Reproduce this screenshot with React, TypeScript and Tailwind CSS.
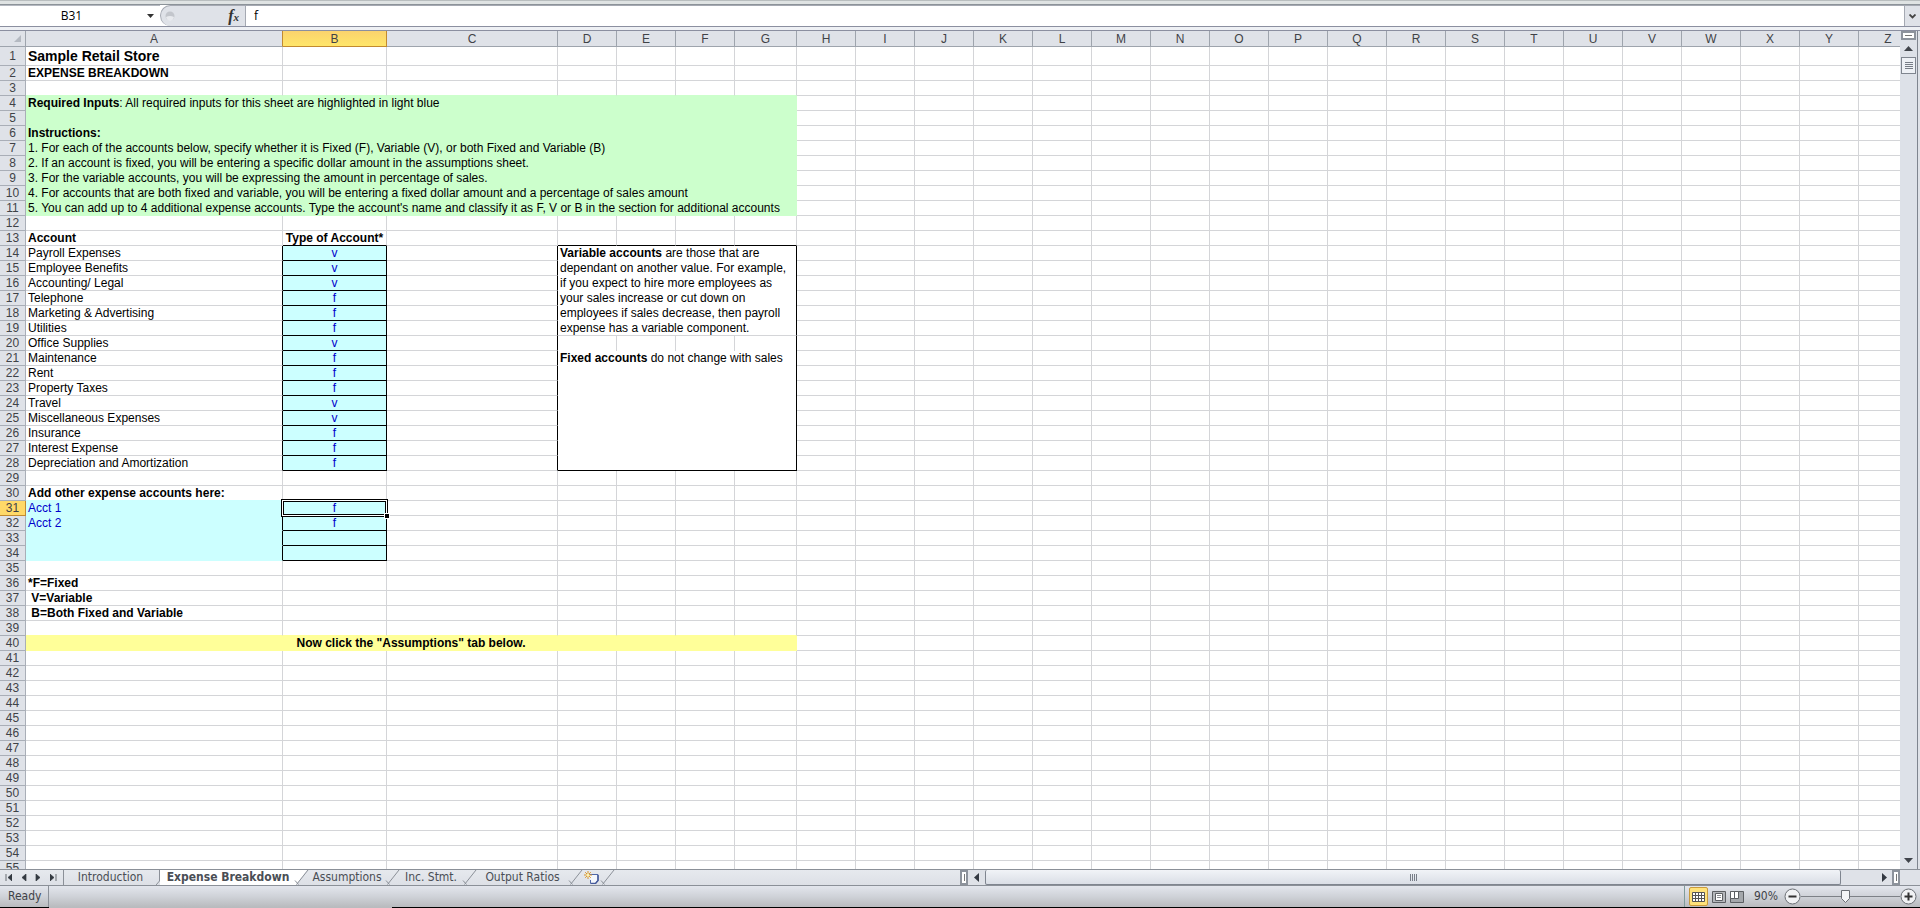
import React from "react";

const GRID = "border-r border-b border-[#d4d5d8]";

const LETTERS = "ABCDEFGHIJKLMNOPQRSTUVWXYZ".split("");

const ACCOUNTS: [string, string][] = [
  ["Payroll Expenses", "v"],
  ["Employee Benefits", "v"],
  ["Accounting/ Legal", "v"],
  ["Telephone", "f"],
  ["Marketing & Advertising", "f"],
  ["Utilities", "f"],
  ["Office Supplies", "v"],
  ["Maintenance", "f"],
  ["Rent", "f"],
  ["Property Taxes", "f"],
  ["Travel", "v"],
  ["Miscellaneous Expenses", "v"],
  ["Insurance", "f"],
  ["Interest Expense", "f"],
  ["Depreciation and Amortization", "f"],
];

const INSTRUCTIONS: Record<number, React.ReactNode> = {
  4: (
    <>
      <b>Required Inputs</b>: All required inputs for this sheet are highlighted in light blue
    </>
  ),
  5: null,
  6: <b>Instructions:</b>,
  7: "1. For each of the accounts below, specify whether it is Fixed (F), Variable (V), or both Fixed and Variable (B)",
  8: "2. If an account is fixed, you will be entering a specific dollar amount in the assumptions sheet.",
  9: "3. For the variable accounts, you will be expressing the amount in percentage of sales.",
  10: "4. For accounts that are both fixed and variable, you will be entering a fixed dollar amount and a percentage of sales amount",
  11: "5. You can add up to 4 additional expense accounts. Type the account's name and classify it as F, V or B in the section for additional accounts",
};

const LABELS: Record<number, string> = {
  2: "EXPENSE BREAKDOWN",
  30: "Add other expense accounts here:",
  36: "*F=Fixed",
  37: "\u00a0V=Variable",
  38: "\u00a0B=Both Fixed and Variable",
};

const EXTRA: Record<number, [string, string]> = {
  31: ["Acct 1", "f"],
  32: ["Acct 2", "f"],
  33: ["", ""],
  34: ["", ""],
};

function Blank({ count, className = GRID }: { count: number; className?: string }) {
  return (
    <>
      {Array.from({ length: count }, (_, i) => (
        <td key={i} className={className} />
      ))}
    </>
  );
}

function AccountType({ value }: { value: string }) {
  return (
    <td className="border-r border-b border-black bg-[#ccffff] text-center text-[#0000cc]">
      {value}
    </td>
  );
}

function RowCells({ row }: { row: number }) {
  if (row in INSTRUCTIONS) {
    return (
      <>
        <td colSpan={7} className="border-r border-b border-[#ccffcc] bg-[#ccffcc] px-[2px]">
          {INSTRUCTIONS[row]}
        </td>
        <Blank count={19} />
      </>
    );
  }

  if (row === 40) {
    return (
      <>
        <td colSpan={7} className="border-r border-b border-[#ffff99] bg-[#ffff99] text-center font-bold">
          Now click the "Assumptions" tab below.
        </td>
        <Blank count={19} />
      </>
    );
  }

  if (row === 3 || row === 39) {
    return (
      <>
        <Blank
          count={7}
          className={
            row === 3
              ? "border-r border-b border-r-[#d4d5d8] border-b-[#ccffcc]"
              : "border-r border-b border-r-[#d4d5d8] border-b-[#ffff99]"
          }
        />
        <Blank count={19} />
      </>
    );
  }

  if (row === 13) {
    return (
      <>
        <td className={`${GRID} px-[2px] font-bold`}>Account</td>
        <td className="border-r border-b border-r-[#d4d5d8] border-b-black text-center font-bold">
          Type of Account*
        </td>
        <Blank count={1} />
        <Blank count={4} className="border-r border-b border-r-[#d4d5d8] border-b-black" />
        <Blank count={19} />
      </>
    );
  }

  if (row >= 14 && row <= 28) {
    const [name, type] = ACCOUNTS[row - 14];
    return (
      <>
        <td className="border-r border-b border-r-black border-b-[#d4d5d8] px-[2px]">{name}</td>
        <AccountType value={type} />
        <td className="border-r border-b border-r-black border-b-[#d4d5d8]" />
        {row === 14 && (
          <td
            colSpan={4}
            rowSpan={6}
            className="border-r border-b border-r-black border-b-[#d4d5d8] px-[2px] align-top"
          >
            <p className="-mb-px leading-[15px]">
              <b>Variable accounts</b> are those that are
              <br />
              dependant on another value. For example,
              <br />
              if you expect to hire more employees as
              <br />
              your sales increase or cut down on
              <br />
              employees if sales decrease, then payroll
              <br />
              expense has a variable component.
            </p>
          </td>
        )}
        {row === 20 && (
          <>
            <Blank count={3} className="border-r border-[#d4d5d8]" />
            <td className="border-r border-black" />
          </>
        )}
        {row === 21 && (
          <td colSpan={4} rowSpan={8} className="border-r border-b border-black px-[2px] align-top">
            <b>Fixed accounts</b> do not change with sales
          </td>
        )}
        <Blank count={19} />
      </>
    );
  }

  if (row in EXTRA) {
    const [name, type] = EXTRA[row];
    return (
      <>
        <td className="border-r border-b border-r-black border-b-[#ccffff] bg-[#ccffff] px-[2px] text-[#0000cc]">
          {name}
        </td>
        {row === 31 ? (
          <td className="relative border-r border-b border-black bg-[#ccffff] text-center text-[#0000cc]">
            {type}
            {/* selection frame and fill handle */}
            <span className="absolute -inset-[2px] border border-black shadow-[inset_0_0_0_1px_white,inset_0_0_0_2px_black]" />
            <span className="absolute -right-[4px] -bottom-[4px] size-[6px] border border-white bg-black" />
          </td>
        ) : (
          <AccountType value={type} />
        )}
        <Blank count={24} />
      </>
    );
  }

  return (
    <>
      <td
        className={
          row === 30
            ? "border-r border-b border-r-[#d4d5d8] border-b-[#ccffff] px-[2px] font-bold"
            : row === 1
              ? `${GRID} px-[2px] text-[14px] font-bold`
              : `${GRID} px-[2px] font-bold`
        }
      >
        {row === 1 ? "Sample Retail Store" : LABELS[row]}
      </td>
      {row === 30 ? <td className="border-r border-b border-r-[#d4d5d8] border-b-black" /> : <Blank count={1} />}
      <Blank count={24} />
    </>
  );
}

function FormulaBar() {
  return (
    <div className="shrink-0">
      <div className="h-[5px] border-t border-b border-t-[#b9bebf] border-b-[#8c9399] bg-[#dfe3e3]" />
      <div className="flex h-[22px] border-b border-[#8b8fa0] bg-[#dfe2e8]">
        <div className="flex w-40 items-center border-t border-[#b4b8c0] bg-white pr-[6px]">
          <input
            aria-label="Name box"
            defaultValue="B31"
            className="w-full min-w-0 flex-1 pr-1 text-center font-['Open_Sans',sans-serif] text-[12px] outline-none"
          />
          <button aria-label="Name list">
            <svg width="7" height="4" viewBox="0 0 7 4">
              <path d="M0 0h7L3.5 4z" fill="#333" />
            </svg>
          </button>
        </div>
        <div className="flex w-[85px] items-center justify-between bg-white">
          <div className="flex h-full flex-1 items-center justify-between rounded-l-full border-t border-l border-[#a5a9b2] bg-[#dfe2e8] pr-[6px] pl-1">
            <svg width="10" height="10" viewBox="0 0 10 10">
              <circle cx="5" cy="5" r="4.5" fill="#c3c6cc" />
              <path d="M1 6q4-2 8 0q-1 4-4 4T1 6z" fill="#e8eaee" />
            </svg>
            <button
              aria-label="Insert function"
              className="font-['Liberation_Serif',serif] text-[16px] leading-none font-bold text-[#333] italic"
            >
              f<span className="text-[11px]">x</span>
            </button>
          </div>
        </div>
        <input
          aria-label="Formula"
          defaultValue="f"
          className="min-w-0 flex-1 border-t border-l border-[#a5a9b2] bg-white pl-2 font-['Open_Sans',sans-serif] text-[12px] outline-none"
        />
        <button
          aria-label="Expand formula bar"
          className="flex w-4 items-center justify-center border-t border-l border-[#a5a9b2] bg-[#dfe2e8]"
        >
          <svg width="7" height="5" viewBox="0 0 7 5">
            <path d="M.5 .5l3 3 3-3" fill="none" stroke="#444" strokeWidth="1.8" />
          </svg>
        </button>
      </div>
      <div className="h-[4px] border-b border-[#8b8fa0] bg-[#eef0f4]" />
    </div>
  );
}

function Sheet() {
  return (
    <div className="min-h-0 min-w-0 flex-1 overflow-hidden bg-white">
      <table className="w-[1918px] table-fixed border-separate border-spacing-0 text-[12px] leading-[14px] whitespace-nowrap text-black">
        <colgroup>
          <col className="w-[26px]" />
          <col className="w-[257px]" />
          <col className="w-[104px]" />
          <col className="w-[171px]" />
          <col className="w-[59px]" span={3} />
          <col className="w-[62px]" />
          <col className="w-[59px]" span={19} />
        </colgroup>
        <thead>
          <tr className="h-4 text-[12px] text-[#3f4247]">
            <th className="border-r border-b border-[#9ea4ad] bg-[#dfe2e8]">
              <svg width="7" height="7" viewBox="0 0 7 7" className="mr-1 ml-auto">
                <path d="M7 0v7H0z" fill="#b4b9c1" />
              </svg>
            </th>
            {LETTERS.map((letter) => (
              <th
                key={letter}
                className={
                  letter === "B"
                    ? "border-r border-b border-[#c28a30] bg-linear-to-b from-[#fbd36d] to-[#ffe66a] font-normal"
                    : letter === "A"
                      ? "border-r border-b border-r-[#c28a30] border-b-[#9ea4ad] bg-[#dfe2e8] font-normal"
                      : "border-r border-b border-[#9ea4ad] bg-[#dfe2e8] font-normal"
                }
              >
                {letter}
              </th>
            ))}
          </tr>
        </thead>
        <tbody>
          {Array.from({ length: 55 }, (_, i) => i + 1).map((row) => (
            <tr key={row} className={row === 1 ? "h-[19px]" : "h-[15px]"}>
              <th
                className={
                  row === 31
                    ? "border-r border-b border-[#c28a30] bg-[#ffd968] text-[12px] font-normal text-[#3f4247]"
                    : "border-r border-b border-[#a9aeb7] bg-[#dfe2e8] text-[12px] font-normal text-[#3f4247]"
                }
              >
                {row}
              </th>
              <RowCells row={row} />
            </tr>
          ))}
        </tbody>
      </table>
    </div>
  );
}

function VerticalScroll() {
  return (
    <div className="flex w-5 shrink-0 bg-[#dfe2e8]">
      <div className="flex w-[18px] flex-col items-center border-r border-[#7f858f] bg-[#dde1e8]">
        <div className="flex h-[9px] w-[15px] items-center justify-center border-2 border-[#8d939c] bg-white">
          <div className="h-px w-[7px] bg-[#777]" />
        </div>
        <button aria-label="Scroll up" className="flex h-[17px] items-center">
          <svg width="9" height="5" viewBox="0 0 9 5">
            <path d="M0 5h9L4.5 0z" fill="#40444b" />
          </svg>
        </button>
        <div className="flex h-[17px] w-[15px] flex-col items-center justify-center gap-px border border-[#7f858f] bg-[#eef1f6]">
          {[0, 1, 2, 3].map((n) => (
            <div key={n} className="h-px w-2 bg-[#777d87]" />
          ))}
        </div>
        <div className="flex-1" />
        <button aria-label="Scroll down" className="flex h-[17px] items-center">
          <svg width="9" height="5" viewBox="0 0 9 5">
            <path d="M0 0h9L4.5 5z" fill="#40444b" />
          </svg>
        </button>
      </div>
    </div>
  );
}

function Slant({ fill = "none" }: { fill?: string }) {
  return (
    <svg width="15" height="15" viewBox="0 0 15 15" className="shrink-0">
      <path d="M0 0h13L2 15H0z" fill={fill} />
      <path d="M14 0L2.500 14.500M1 10.500l3.500 4" fill="none" stroke="#8b9098" />
    </svg>
  );
}

function SheetTabs() {
  return (
    <div className="flex min-w-0 flex-1 items-stretch bg-linear-to-b from-[#e6e9ee] to-[#dde0e6] text-[#4a4e55]">
      <div className="flex w-[63px] shrink-0 items-center gap-2 pl-[5px]">
        {[
          ["First sheet", "M1 0v7M7 0v7L3 3.500z"],
          ["Previous sheet", "M6 0v7L2 3.500z"],
          ["Next sheet", "M1 0v7L5 3.500z"],
          ["Last sheet", "M0 0v7L4 3.500zM6 0v7"],
        ].map(([label, d]) => (
          <button key={label} aria-label={label}>
            <svg width="7" height="7" viewBox="0 0 7 7">
              <path d={d} fill="#333941" stroke="#333941" strokeWidth=".7" />
            </svg>
          </button>
        ))}
      </div>
      <button className="w-[93px] shrink-0 border-l border-[#8b9098] pl-px">Introduction</button>
      <svg width="4" height="15" viewBox="0 0 4 15" className="shrink-0">
        <path d="M3.500 0v11L0 15" fill="none" stroke="#8b9098" />
      </svg>
      <button className="w-[134px] shrink-0 bg-white pl-[2px] font-bold">Expense Breakdown</button>
      <Slant fill="#fff" />
      <button className="w-[76px] shrink-0">Assumptions</button>
      <Slant />
      <button className="w-[62px] shrink-0">Inc. Stmt.</button>
      <Slant />
      <button className="w-[91px] shrink-0">Output Ratios</button>
      <Slant />
      <button aria-label="Insert worksheet" className="flex w-[17px] shrink-0 items-center justify-center">
        <svg width="15" height="13" viewBox="0 0 15 13">
          <path d="M5 3.500h9v6l-2.500 3H6.500V9" fill="#f4f7fc" stroke="#5068a8" />
          <path d="M14 4v5.500l-2.500 3H7" fill="none" stroke="#44599a" strokeWidth="1.500" />
          <path d="M4 0v8M0 4h8M1.200 1.200l5.600 5.600M6.800 1.200L1.200 6.800" stroke="#d9952b" />
          <circle cx="4" cy="4" r="1.500" fill="#fff3b0" />
        </svg>
      </button>
      <Slant />
    </div>
  );
}

function HorizontalScroll() {
  return (
    <div className="flex min-w-0 flex-1 items-stretch">
      <div className="flex w-2 items-center justify-center border-2 border-[#8d939c] bg-white">
        <div className="h-[7px] w-px bg-[#777]" />
      </div>
      <button aria-label="Scroll left" className="flex w-[17px] items-center justify-center">
        <svg width="5" height="9" viewBox="0 0 5 9">
          <path d="M5 0v9L0 4.500z" fill="#333941" />
        </svg>
      </button>
      <div className="flex flex-1">
        <div className="flex w-[96%] items-center justify-center gap-px rounded-xs border-x border-b border-[#7f858f] bg-linear-to-b from-[#f1f3f7] to-[#dadee6]">
          {[0, 1, 2, 3].map((n) => (
            <div key={n} className="h-[7px] w-px bg-[#777d87]" />
          ))}
        </div>
      </div>
      <button aria-label="Scroll right" className="flex w-[15px] items-center justify-center">
        <svg width="5" height="9" viewBox="0 0 5 9">
          <path d="M0 0v9l5-4.500z" fill="#333941" />
        </svg>
      </button>
      <div className="mr-5 flex w-2 items-center justify-center border-2 border-[#8d939c] bg-white">
        <div className="h-[7px] w-px bg-[#777]" />
      </div>
    </div>
  );
}

function StatusBar() {
  return (
    <div className="flex h-[21px] items-center bg-linear-to-b from-[#e3e6ed] via-[#cfd2d8] to-[#b9bbbe] text-[#3f4247]">
      <div className="flex h-full w-[49px] items-center border-r border-[#8b9098] pl-2">Ready</div>
      <div className="flex-1" />
      <div className="mr-1 flex h-full items-center gap-1 border-l border-[#7f9a9a] pl-1">
        <button
          aria-label="Normal view"
          className="flex h-[19px] w-[19px] items-center justify-center rounded-xs border border-[#c99a3c] bg-[#ffe27a]"
        >
          <svg width="13" height="10" viewBox="0 0 13 10">
            <path d="M.5.5h12v9H.5zM.5 3.500h12M.5 6.500h12M3.500.5v9M6.500.5v9M9.500.5v9" fill="#fff" stroke="#555" />
          </svg>
        </button>
        <button aria-label="Page layout">
          <svg width="14" height="12" viewBox="0 0 14 12">
            <path d="M.5.5h13v11H.5z" fill="#b4b7bb" stroke="#5c5f63" />
            <path d="M3.500 2.500h7v7h-7z" fill="#fff" stroke="#5c5f63" />
            <path d="M5 4.500h4M5 6.500h4" stroke="#8b8e93" />
          </svg>
        </button>
        <button aria-label="Page break preview">
          <svg width="14" height="12" viewBox="0 0 14 12">
            <path d="M.5.5h13v11H.5z" fill="#a4a7ab" stroke="#5c5f63" />
            <path d="M.5.5h4v7h-4zM4.500.5h4v7h-4z" fill="#fff" stroke="#5c5f63" />
          </svg>
        </button>
      </div>
      <button className="w-9">90%</button>
      <button aria-label="Zoom out">
        <svg width="17" height="17" viewBox="0 0 17 17">
          <circle cx="8.500" cy="8.500" r="7.500" fill="#f1f2f4" stroke="#6b6f75" />
          <path d="M4.500 8.500h8" stroke="#333" strokeWidth="2" />
        </svg>
      </button>
      <label className="relative flex h-4 w-[99px] items-center">
        <svg width="99" height="13" viewBox="0 0 99 13">
          <path d="M0 6.500h99" stroke="#7d8187" />
          <path d="M40.500.5h8v8l-4 4-4-4z" fill="#f4f5f7" stroke="#6b6f75" />
        </svg>
        <input
          type="range"
          aria-label="Zoom"
          min={0}
          max={200}
          defaultValue={90}
          className="absolute inset-0 w-full opacity-0"
        />
      </label>
      <button aria-label="Zoom in" className="mr-[3px]">
        <svg width="17" height="17" viewBox="0 0 17 17">
          <circle cx="8.500" cy="8.500" r="7.500" fill="#f1f2f4" stroke="#6b6f75" />
          <path d="M4.500 8.500h8M8.500 4.500v8" stroke="#333" strokeWidth="2" />
        </svg>
      </button>
    </div>
  );
}

export default function App() {
  return (
    <div className="flex h-screen flex-col overflow-hidden bg-[#dfe2e8] font-['Liberation_Sans',Arial,sans-serif]">
      <FormulaBar />
      <div className="flex min-h-0 flex-1">
        <Sheet />
        <VerticalScroll />
      </div>
      <div className="shrink-0 font-['DejaVu_Sans_Condensed','DejaVu_Sans',sans-serif] text-[12px] leading-[15px]">
        <div className="flex h-[17px] border-t border-b border-[#8b9098]">
          <SheetTabs />
          <HorizontalScroll />
        </div>
        <StatusBar />
        <div className="flex h-px bg-[#b9bbbe]">
          <div className="w-[49px] bg-black" />
          <div className="w-[343px]" />
          <div className="flex-1 bg-black" />
        </div>
      </div>
    </div>
  );
}
